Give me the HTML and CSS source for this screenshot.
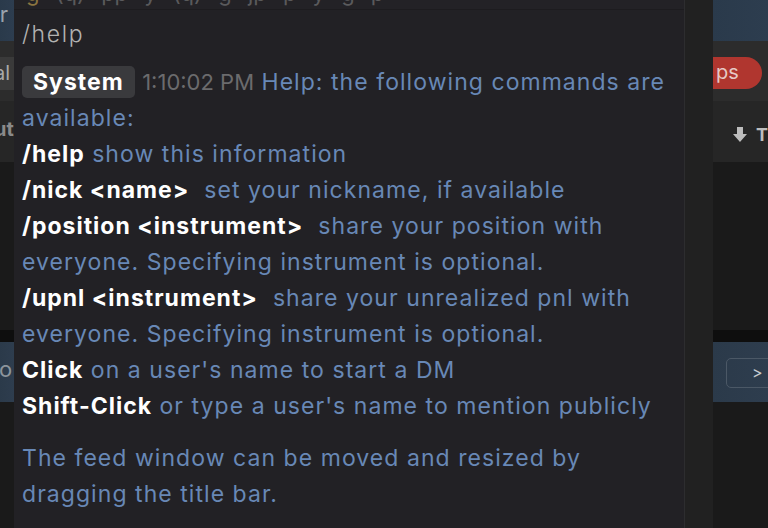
FILE: index.html
```html
<!DOCTYPE html>
<html>
<head>
<meta charset="utf-8">
<link rel="stylesheet" href="styles.css">
</head>
<body>
<div class="app">
  <div class="side side-left">
    <div class="band band-blue"><span class="clip-text clip-er">er</span></div>
    <div class="band band-gray"><span class="btn-left">al</span></div>
    <div class="band band-head"><span class="clip-text clip-ut">ut</span></div>
    <div class="band band-dark"></div>
    <div class="band band-black"></div>
    <div class="band band-blue2"><span class="clip-text clip-ro">ro</span></div>
    <div class="band band-rest"></div>
  </div>

  <div class="feed">
    <div class="feed-top"><span class="prev-line"><span class="prev-y">g</span> (q) pp y (q) g jp p y g p</span></div>
    <div class="feed-body">
      <div class="echo">/help</div>
      <div class="msg">
        <span class="badge">System</span> <span class="time">1:10:02 PM</span> <span class="say">Help: the following commands are<br>available:</span>
        <div class="cmd"><b>/help</b> <span class="say">show this information</span></div>
        <div class="cmd"><b>/nick &lt;name&gt;</b>&nbsp; <span class="say">set your nickname, if available</span></div>
        <div class="cmd"><b>/position &lt;instrument&gt;</b>&nbsp; <span class="say">share your position with<br>everyone. Specifying instrument is optional.</span></div>
        <div class="cmd"><b>/upnl &lt;instrument&gt;</b>&nbsp; <span class="say">share your unrealized pnl with<br>everyone. Specifying instrument is optional.</span></div>
        <div class="cmd"><b>Click</b> <span class="say">on a user's name to start a DM</span></div>
        <div class="cmd"><b>Shift-Click</b> <span class="say">or type a user's name to mention publicly</span></div>
        <p class="note say">The feed window can be moved and resized by<br>dragging the title bar.</p>
      </div>
    </div>
  </div>

  <div class="track"></div>

  <div class="side side-right">
    <div class="band band-blue"></div>
    <div class="band band-gray"><span class="pill">ps</span></div>
    <div class="band band-head"><span class="sort"><svg class="arrow" width="14" height="15" viewBox="0 0 14 15"><path d="M4 0h6v7h4l-7 8-7-8h4z" fill="#bdbdbd"/></svg><span class="sort-t">T</span></span></div>
    <div class="band band-dark"></div>
    <div class="band band-black"></div>
    <div class="band band-blue2"><span class="next-btn">&gt;</span></div>
    <div class="band band-rest"></div>
  </div>
</div>
</body>
</html>
```

FILE: styles.css
```css
html, body {
  margin: 0;
  padding: 0;
  background: #1b1b1b;
}
body {
  width: 768px;
  height: 528px;
  overflow: hidden;
  font-family: "Inter", "DejaVu Sans", sans-serif;
}
.app {
  display: flex;
  height: 528px;
}
.side {
  display: flex;
  flex-direction: column;
  overflow: hidden;
}
.side-left { width: 14px; }
.side-right { width: 55px; }
.band { flex: none; position: relative; overflow: hidden; }
.band-blue { height: 41px; background: linear-gradient(90deg, #2a3a4b, #2d3d4f); }
.band-gray { height: 60px; background: #2c2c2c; }
.band-head { height: 61px; background: #262626; }
.band-dark { height: 168px; background: #1a1a1a; }
.band-black { height: 12px; background: #0e0e0e; }
.band-blue2 { height: 60px; background: linear-gradient(90deg, #2b3a4a, #2e3d4e); }
.band-rest { flex: 1; background: #1a1a1a; }

.clip-text {
  display: block;
  font-size: 22px;
  color: #9aa3ac;
  white-space: nowrap;
  margin-left: -13px;
}
.clip-er { margin-top: 1px; }
.clip-ut { margin-top: 16px; font-weight: 700; color: #8a8a8a; font-size: 20px; margin-left: -6px; }
.clip-ro { margin-top: 14px; color: #8c949c; margin-left: -9px; }
.btn-left {
  display: block;
  margin-top: 16px;
  height: 33px;
  line-height: 33px;
  background: #3a3a3a;
  color: #a9a9a9;
  font-size: 20px;
  text-indent: -6px;
  white-space: nowrap;
}

.pill {
  display: block;
  margin-top: 16px;
  width: 49px;
  height: 32px;
  line-height: 31px;
  background: #b0362f;
  border-radius: 0 16px 16px 0;
  color: #e6c9c6;
  font-size: 20px;
  text-indent: 3px;
}
.sort {
  display: flex;
  align-items: center;
  margin: 23px 0 0 20px;
  gap: 9px;
}
.sort-t { color: #bdbdbd; font-weight: 700; font-size: 18px; }
.next-btn {
  display: block;
  margin: 16px 0 0 13px;
  height: 28px;
  width: 50px;
  border: 1px solid #4b5866;
  border-radius: 5px;
  color: #c8ccd0;
  font-size: 16px;
  line-height: 27px;
  text-indent: 25px;
}

.feed {
  width: 670px;
  background: #222125;
  display: flex;
  flex-direction: column;
  overflow: hidden;
}
.track {
  width: 28px;
  background: #212121;
  border-left: 1px solid #2d2d2f;
}
.feed-top {
  height: 9px;
  overflow: hidden;
  border-bottom: 1px solid #1d1c1f;
  background: #232226;
}
.prev-line {
  display: block;
  margin-top: -20px;
  margin-left: 12px;
  font-size: 22px;
  line-height: 26px;
  color: #5a5a5c;
  white-space: nowrap;
  word-spacing: 10px;
}
.prev-y { color: #8a7440; }
.feed-body {
  padding: 6px 8px 0 8px;
}
.echo {
  font-size: 23px;
  line-height: 36px;
  font-weight: 300;
  letter-spacing: 1.6px;
  color: #b2b2b2;
}
.msg {
  margin-top: 12px;
  font-size: 23px;
  line-height: 36px;
  letter-spacing: 1px;
  white-space: nowrap;
}
.badge {
  display: inline-block;
  background: #3a3a3d;
  color: #ffffff;
  font-weight: 700;
  border-radius: 5px;
  padding: 0 11px;
  line-height: 32px;
}
.time { color: #6b6b6d; font-size: 22px; letter-spacing: 0; }
.say { color: #6888b6; letter-spacing: 1.05px; }
.cmd b { color: #ffffff; font-weight: 700; }
.note {
  margin: 16px 0 0 0;
}
```
